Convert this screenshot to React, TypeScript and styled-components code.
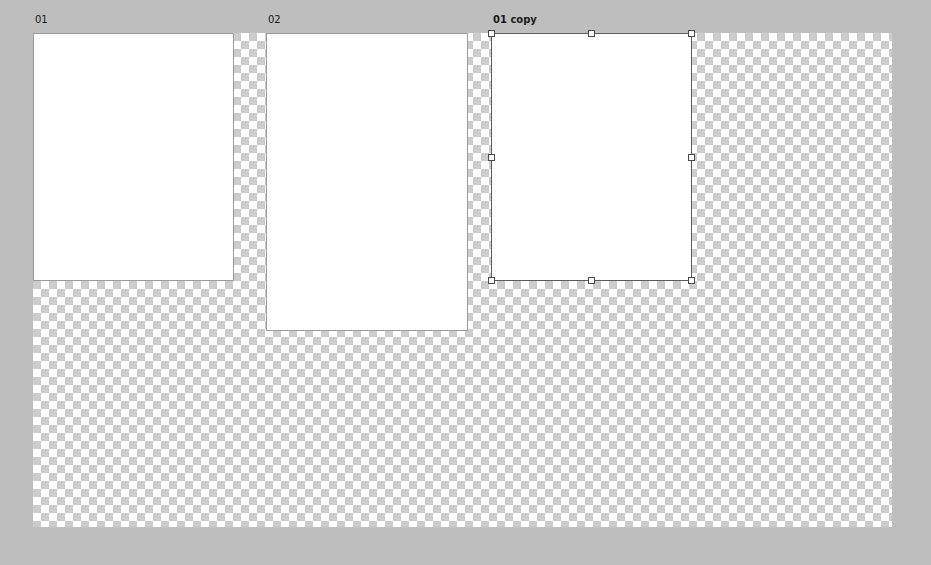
import React from 'react'
import styled, { createGlobalStyle } from 'styled-components'

const GlobalStyle = createGlobalStyle`
  html, body {
    margin: 0;
    padding: 0;
    background: #bebebe;
  }
  body {
    width: 931px;
    height: 565px;
    overflow: hidden;
    font-family: Tahoma, "DejaVu Sans", "Liberation Sans", sans-serif;
  }
`

type Board = {
  name: string
  left: number
  width: number
  height: number
  selected?: boolean
}

// positions on the canvas are the content here, so they stay as data
const boards: Board[] = [
  { name: '01', left: 0, width: 201, height: 248 },
  { name: '02', left: 233, width: 202, height: 298 },
  { name: '01 copy', left: 458, width: 201, height: 248, selected: true },
]

const S = {
  Workspace: styled.div`
    width: 931px;
    height: 565px;
    padding: 33px 0 0 33px;
    box-sizing: border-box;
  `,
  Canvas: styled.div`
    position: relative;
    width: 859px;
    height: 494px;
    background: repeating-conic-gradient(#cccccc 0 25%, #ffffff 0 50%) 0 0 / 16px 16px;
  `,
  Artboard: styled.div<{ $selected?: boolean }>`
    position: absolute;
    top: 0;
    box-sizing: border-box;
    background: #ffffff;
    border: 1px solid ${({ $selected }) => ($selected ? '#5c5c5c' : '#9c9c9c')};
  `,
  Label: styled.span<{ $selected?: boolean }>`
    position: absolute;
    left: 1px;
    top: -20px;
    line-height: 12px;
    color: #1a1a1a;
    white-space: nowrap;
    font-size: 10px;
    font-weight: ${({ $selected }) => ($selected ? 700 : 400)};
  `,
  Handle: styled.span`
    position: absolute;
    width: 7px;
    height: 7px;
    box-sizing: border-box;
    background: #ffffff;
    border: 1px solid #4a4a4a;
  `,
}

const handleSpots = [
  [0, 0], [50, 0], [100, 0],
  [0, 50], [100, 50],
  [0, 100], [50, 100], [100, 100],
]

// centre each handle on the border line
const spot = (p: number) => `calc(${p}% + ${p / 100 - 4}px)`

const Handles = () => (
  <>
    {handleSpots.map(([x, y]) => (
      <S.Handle key={`${x}-${y}`} style={{ left: spot(x), top: spot(y) }} />
    ))}
  </>
)

export default function App() {
  return (
    <>
      <GlobalStyle />
      <S.Workspace>
        <S.Canvas>
          {boards.map((b) => (
            <S.Artboard
              key={b.name}
              $selected={b.selected}
              style={{ left: b.left, width: b.width, height: b.height }}
            >
              <S.Label $selected={b.selected}>{b.name}</S.Label>
              {b.selected && <Handles />}
            </S.Artboard>
          ))}
        </S.Canvas>
      </S.Workspace>
    </>
  )
}
